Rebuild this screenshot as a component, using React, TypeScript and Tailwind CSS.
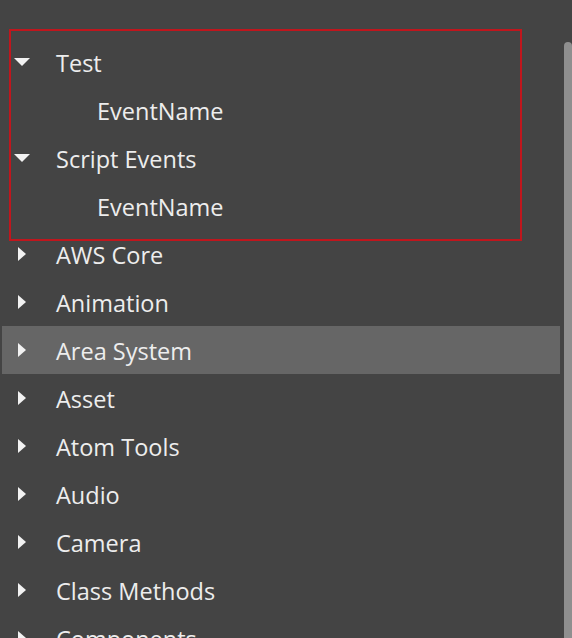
import React from 'react';

type Node = { label: string; depth: number; open?: boolean; leaf?: boolean; selected?: boolean };

const nodes: Node[] = [
  { label: 'Test', depth: 0, open: true },
  { label: 'EventName', depth: 1, leaf: true },
  { label: 'Script Events', depth: 0, open: true },
  { label: 'EventName', depth: 1, leaf: true },
  { label: 'AWS Core', depth: 0 },
  { label: 'Animation', depth: 0 },
  { label: 'Area System', depth: 0, selected: true },
  { label: 'Asset', depth: 0 },
  { label: 'Atom Tools', depth: 0 },
  { label: 'Audio', depth: 0 },
  { label: 'Camera', depth: 0 },
  { label: 'Class Methods', depth: 0 },
  { label: 'Components', depth: 0 },
];

const Caret: React.FC<{ open?: boolean }> = ({ open }) =>
  open ? (
    <svg width="16" height="8" viewBox="0 0 16 8" className="ml-[12px]">
      <path d="M0 0 H16 L8 8 Z" fill="#f2f2f2" />
    </svg>
  ) : (
    <svg width="8" height="14" viewBox="0 0 8 14" className="ml-[16px]">
      <path d="M0 0 L8 7 L0 14 Z" fill="#f2f2f2" />
    </svg>
  );

export default function App() {
  return (
    <div
      className="relative w-[572px] h-[638px] overflow-hidden bg-[#444444] text-[#ededed]"
      style={{ fontFamily: '"Open Sans", "Noto Sans", sans-serif' }}
    >
      <div className="flex">
        <div className="ml-[2px] w-[558px] pt-[38px]">
          {nodes.map((n, i) => (
            <div
              key={i}
              className={`flex items-center h-12 text-[23.5px] ${n.selected ? 'bg-[#666666]' : ''}`}
            >
              <div className="w-[54px] flex items-center">
                {!n.leaf && <Caret open={n.open} />}
              </div>
              <span className={`pt-[3px] ${n.depth === 1 ? 'ml-[41px]' : ''}`}>{n.label}</span>
            </div>
          ))}
        </div>
        <div className="ml-auto mt-[42px] w-[8px] h-[700px] rounded-t-[4px] bg-[#8f8f8f]" />
      </div>

      {/* annotation box */}
      <div className="absolute left-[9px] top-[29px] w-[513px] h-[212px] border-2 border-[#c0161d]" />
    </div>
  );
}
